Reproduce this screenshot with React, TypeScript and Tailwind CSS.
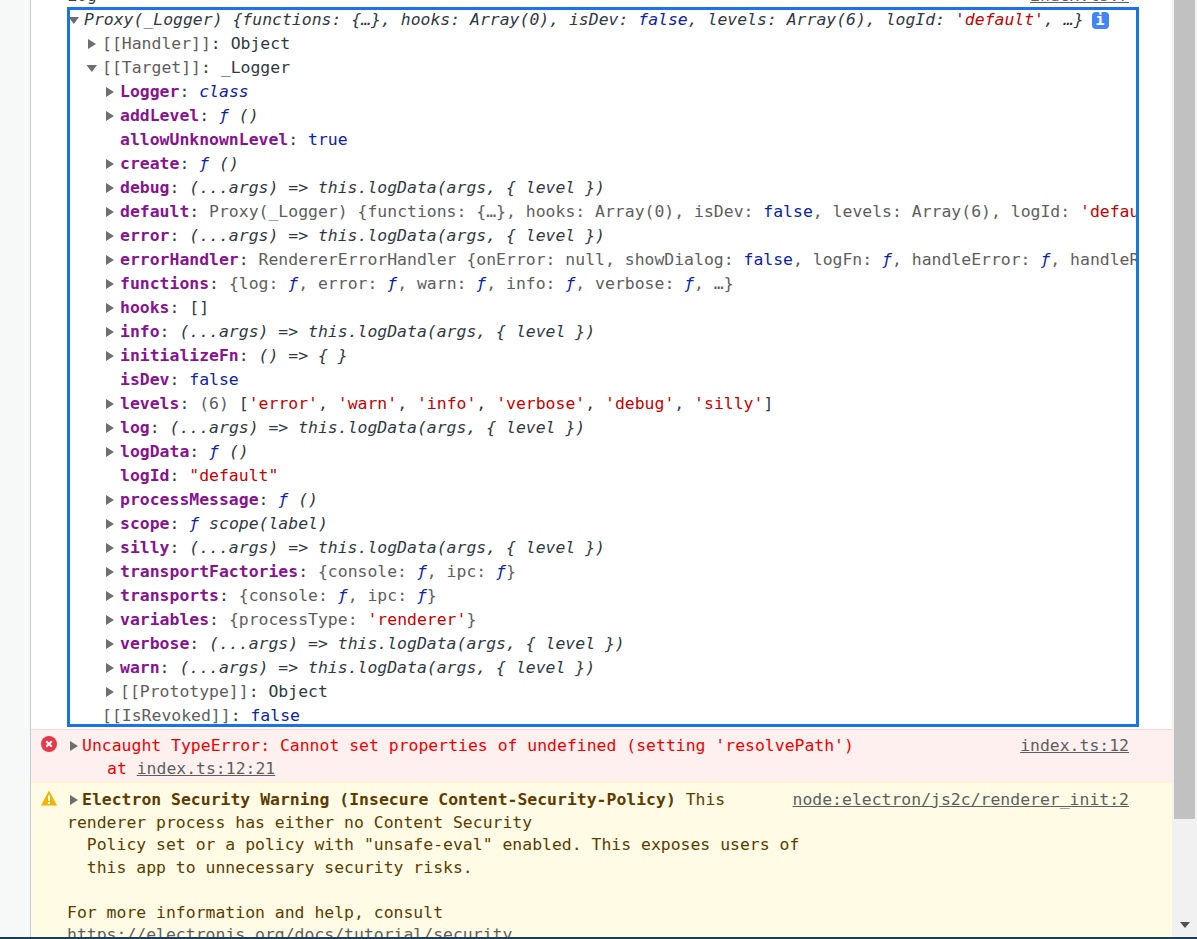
import type { ReactNode } from "react";

const mono = "font-['DejaVu_Sans_Mono','Liberation_Mono',monospace]";

function K({ children }: { children: ReactNode }) {
  return <span className="font-bold text-[#881391]">{children}</span>;
}
function G({ children }: { children: ReactNode }) {
  return <span className="text-[#5e5e5e]">{children}</span>;
}
function Fn({ children = "ƒ" }: { children?: ReactNode }) {
  return <span className="italic text-[#0d22aa]">{children}</span>;
}
function Bl({ children }: { children: ReactNode }) {
  return <span className="text-[#0d22aa]">{children}</span>;
}
function Str({ children }: { children: ReactNode }) {
  return <span className="text-[#c80000]">{children}</span>;
}
function It({ children }: { children: ReactNode }) {
  return <span className="italic text-[#303942]">{children}</span>;
}

function Arrow({ open }: { open?: boolean }) {
  return (
    <svg width="12" height="12" viewBox="0 0 12 12" className="shrink-0 overflow-visible fill-[#6e6e6e]">
      {open ? <path d="M-1.5 3h10.5l-5.2 7z" /> : <path d="M0 1v10l8-5z" />}
    </svg>
  );
}

function Row({
  level,
  arrow,
  children,
}: {
  level: 1 | 2;
  arrow?: "right" | "down";
  children: ReactNode;
}) {
  const pad = level === 1 ? "pl-[18px]" : "pl-[36px]";
  return (
    <div className={`flex h-6 items-center whitespace-pre ${pad}`}>
      <span className="flex w-[14px] shrink-0 items-center">
        {arrow && <Arrow open={arrow === "down"} />}
      </span>
      <span className="min-w-0 text-[#303942]">{children}</span>
    </div>
  );
}

const logLine = (
  <>
    <It>(...args) =&gt; this.logData(args, {"{"} level {"}"})</It>
  </>
);

function Tree() {
  return (
    <div className="-mt-[2px]">
      <div className="flex h-6 items-center whitespace-pre">
        <span className="flex w-[14px] shrink-0 items-center">
          <Arrow open />
        </span>
        <span className="italic text-[#303942]">
          Proxy(_Logger) {"{"}functions: {"{"}…{"}"}, hooks: Array(0), isDev: <Bl>false</Bl>, levels: Array(6), logId: <Str>'default'</Str>, …{"}"}
        </span>
        <span className="ml-[8px] flex h-[17px] w-[17px] items-center justify-center rounded-[4px] bg-[#4285f4] text-[15px] font-bold leading-none text-white">
          i
        </span>
      </div>
      <Row level={1} arrow="right"><G>[[Handler]]</G>: Object</Row>
      <Row level={1} arrow="down"><G>[[Target]]</G>: _Logger</Row>
      <Row level={2} arrow="right"><K>Logger</K>: <Fn>class</Fn></Row>
      <Row level={2} arrow="right"><K>addLevel</K>: <Fn /> <It>()</It></Row>
      <Row level={2}><K>allowUnknownLevel</K>: <Bl>true</Bl></Row>
      <Row level={2} arrow="right"><K>create</K>: <Fn /> <It>()</It></Row>
      <Row level={2} arrow="right"><K>debug</K>: {logLine}</Row>
      <Row level={2} arrow="right">
        <K>default</K>: <G>Proxy(_Logger) {"{"}functions: {"{"}…{"}"}, hooks: Array(0), isDev: </G><Bl>false</Bl><G>, levels: Array(6), logId: </G><Str>'defau</Str>
      </Row>
      <Row level={2} arrow="right"><K>error</K>: {logLine}</Row>
      <Row level={2} arrow="right">
        <K>errorHandler</K>: <G>RendererErrorHandler {"{"}onError: null, showDialog: </G><Bl>false</Bl><G>, logFn: </G><Fn /><G>, handleError: </G><Fn /><G>, handleR</G>
      </Row>
      <Row level={2} arrow="right">
        <K>functions</K>: <G>{"{"}log: </G><Fn /><G>, error: </G><Fn /><G>, warn: </G><Fn /><G>, info: </G><Fn /><G>, verbose: </G><Fn /><G>, …{"}"}</G>
      </Row>
      <Row level={2} arrow="right"><K>hooks</K>: []</Row>
      <Row level={2} arrow="right"><K>info</K>: {logLine}</Row>
      <Row level={2} arrow="right"><K>initializeFn</K>: <It>() =&gt; {"{"} {"}"}</It></Row>
      <Row level={2}><K>isDev</K>: <Bl>false</Bl></Row>
      <Row level={2} arrow="right">
        <K>levels</K>: <G>(6)</G> [<Str>'error'</Str>, <Str>'warn'</Str>, <Str>'info'</Str>, <Str>'verbose'</Str>, <Str>'debug'</Str>, <Str>'silly'</Str>]
      </Row>
      <Row level={2} arrow="right"><K>log</K>: {logLine}</Row>
      <Row level={2} arrow="right"><K>logData</K>: <Fn /> <It>()</It></Row>
      <Row level={2}><K>logId</K>: <Str>"default"</Str></Row>
      <Row level={2} arrow="right"><K>processMessage</K>: <Fn /> <It>()</It></Row>
      <Row level={2} arrow="right"><K>scope</K>: <Fn /> <It>scope(label)</It></Row>
      <Row level={2} arrow="right"><K>silly</K>: {logLine}</Row>
      <Row level={2} arrow="right">
        <K>transportFactories</K>: <G>{"{"}console: </G><Fn /><G>, ipc: </G><Fn /><G>{"}"}</G>
      </Row>
      <Row level={2} arrow="right">
        <K>transports</K>: <G>{"{"}console: </G><Fn /><G>, ipc: </G><Fn /><G>{"}"}</G>
      </Row>
      <Row level={2} arrow="right">
        <K>variables</K>: <G>{"{"}processType: </G><Str>'renderer'</Str><G>{"}"}</G>
      </Row>
      <Row level={2} arrow="right"><K>verbose</K>: {logLine}</Row>
      <Row level={2} arrow="right"><K>warn</K>: {logLine}</Row>
      <Row level={2} arrow="right"><G>[[Prototype]]</G>: Object</Row>
      <Row level={1}><G>[[IsRevoked]]</G>: <Bl>false</Bl></Row>
    </div>
  );
}

function ErrorIcon() {
  return (
    <svg width="16" height="16" viewBox="0 0 16 16">
      <circle cx="8" cy="8" r="8" fill="#e8364a" />
      <path d="M5.2 5.2l5.6 5.6M10.8 5.2l-5.6 5.6" stroke="#fff" strokeWidth="2" />
    </svg>
  );
}

function WarningIcon() {
  return (
    <svg width="16" height="16" viewBox="0 0 16 16">
      <path d="M8 .5L16 15.5H0z" fill="#f4b400" />
      <path d="M7 5.5h2v5.5H7zM7 12h2v2H7z" fill="#fff" />
    </svg>
  );
}

export default function App() {
  return (
    <div className={`flex h-[939px] w-[1197px] flex-col overflow-hidden bg-white text-[16.45px] ${mono}`}>
      <div className="flex min-h-0 flex-1">
        <div className="w-[31px] shrink-0 border-r border-[#c4cad4] bg-[#f7f9f9]" />
        <main className="flex w-[1141px] shrink-0 flex-col">
          <div className="-mt-[15px] flex h-[22px] shrink-0 items-center justify-between pl-[36px] pr-[43px] text-[#303942]">
            <span>Log</span>
            <span className="text-[#5e5e5e] underline">index.ts:7</span>
          </div>
          <div className="ml-[36px] mr-[33px] h-[720px] shrink-0 overflow-hidden border-[3px] border-[#1a73e8]">
            <Tree />
          </div>
          <section className="mt-[2px] flex h-[54px] shrink-0 border-y border-t-[#ffd6d6] border-b-[#fff5c2] bg-[#fff0f0] pr-[43px] text-[#f00000]">
            <span className="flex w-[36px] shrink-0 justify-center pt-[6px]">
              <ErrorIcon />
            </span>
            <div className="flex min-w-0 flex-1 justify-between whitespace-pre pt-[5px] leading-[22.5px]">
              <div className="min-w-0 flex-1">
                <div className="flex items-center">
                  <span className="flex w-[15px] items-center pl-[3px]"><Arrow /></span>
                  <span>Uncaught TypeError: Cannot set properties of undefined (setting 'resolvePath')</span>
                </div>
                <div className="pl-[40px]">at <span className="text-[#5e5e5e] underline">index.ts:12:21</span></div>
              </div>
              <span className="shrink-0 text-[#5e5e5e] underline">index.ts:12</span>
            </div>
          </section>
          <section className="flex min-h-0 flex-1 bg-[#fffbe5] pr-[43px] text-[#5c3c00]">
            <span className="flex w-[36px] shrink-0 justify-center pt-[7px]">
              <WarningIcon />
            </span>
            <div className="flex min-w-0 flex-1 justify-between whitespace-pre pt-[6px] leading-[22.5px]">
              <div className="min-w-0 flex-1">
                <div className="flex items-center">
                  <span className="flex w-[15px] items-center pl-[3px]"><Arrow /></span>
                  <span><b>Electron Security Warning (Insecure Content-Security-Policy)</b> This</span>
                </div>
                <div>renderer process has either no Content Security</div>
                <div>{"  "}Policy set or a policy with "unsafe-eval" enabled. This exposes users of</div>
                <div>{"  "}this app to unnecessary security risks.</div>
                <div className="h-[22.5px]" />
                <div>For more information and help, consult</div>
                <div className="text-[#5e5e5e] underline">https://electronjs.org/docs/tutorial/security</div>
              </div>
              <span className="shrink-0 text-[#5e5e5e] underline">node:electron/js2c/renderer_init:2</span>
            </div>
          </section>
        </main>
        <aside className="flex w-[25px] shrink-0 flex-col bg-[#f1f1f1] px-[2px]">
          <div className="h-[819px] bg-[#c1c1c1]" />
          <div className="mt-auto flex justify-center pb-[8px]">
            <svg width="12" height="8" viewBox="0 0 12 8" className="fill-[#505050]"><path d="M1 1h10L6 7z" /></svg>
          </div>
        </aside>
      </div>
      <div className="h-[2px] shrink-0 bg-[#1c3d5a]" />
    </div>
  );
}
